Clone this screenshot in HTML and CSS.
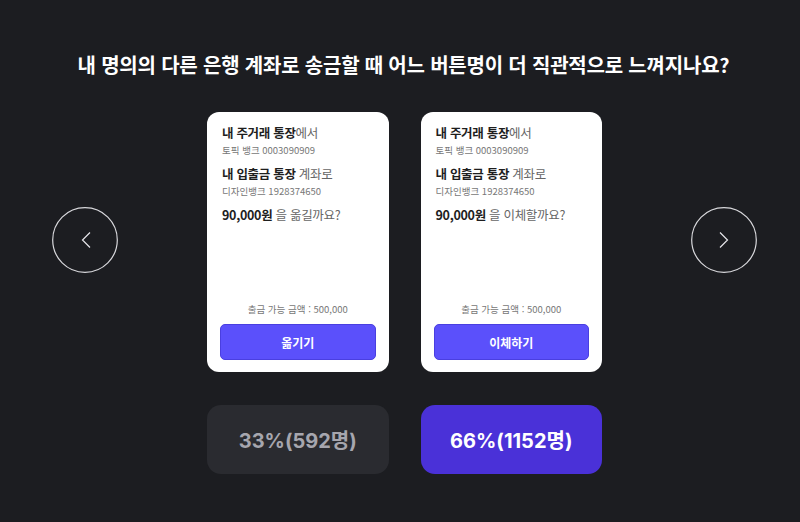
FILE: index.html
```html
<!DOCTYPE html>
<html lang="ko">
<head>
<meta charset="utf-8">
<link rel="stylesheet" href="styles.css">
</head>
<body>
<div class="page">
  <h1 class="title">내 명의의 다른 은행 계좌로 송금할 때 어느 버튼명이 더 직관적으로 느껴지나요?</h1>
  <div class="stage">
    <button class="nav">
      <svg width="66" height="66" viewBox="0 0 66 66"><circle cx="33" cy="33" r="32.3" fill="none" stroke="#d8d8dc" stroke-width="1.2"/><path d="M38 25.5 L30.5 33 L38 40.5" fill="none" stroke="#e6e6ea" stroke-width="1.2"/></svg>
    </button>
    <div class="center">
      <div class="cards">
        <div class="card">
          <div class="line"><b>내 주거래 통장</b><span class="soft">에서</span></div>
          <div class="sub">토픽 뱅크 0003090909</div>
          <div class="line gap"><b>내 입출금 통장</b> <span class="soft">계좌로</span></div>
          <div class="sub">디자인뱅크 1928374650</div>
          <div class="line gap"><b>90,000원</b> <span class="soft">을 옮길까요?</span></div>
          <div class="avail">출금 가능 금액 : 500,000</div>
          <div class="btn">옮기기</div>
        </div>
        <div class="card">
          <div class="line"><b>내 주거래 통장</b><span class="soft">에서</span></div>
          <div class="sub">토픽 뱅크 0003090909</div>
          <div class="line gap"><b>내 입출금 통장</b> <span class="soft">계좌로</span></div>
          <div class="sub">디자인뱅크 1928374650</div>
          <div class="line gap"><b>90,000원</b> <span class="soft">을 이체할까요?</span></div>
          <div class="avail">출금 가능 금액 : 500,000</div>
          <div class="btn">이체하기</div>
        </div>
      </div>
      <div class="results">
        <div class="result lose">33%(592명)</div>
        <div class="result win">66%(1152명)</div>
      </div>
    </div>
    <button class="nav">
      <svg width="66" height="66" viewBox="0 0 66 66"><circle cx="33" cy="33" r="32.3" fill="none" stroke="#d8d8dc" stroke-width="1.2"/><path d="M29 25.5 L36.5 33 L29 40.5" fill="none" stroke="#e6e6ea" stroke-width="1.2"/></svg>
    </button>
  </div>
</div>
</body>
</html>
```
FILE: styles.css
```css
* { box-sizing: border-box; }
html, body { margin: 0; padding: 0; }
body {
  background: #1c1d21;
  width: 800px;
  height: 522px;
  overflow: hidden;
  font-family: Inter, "Noto Sans CJK KR", sans-serif;
}
.page {
  padding-top: 50px;
}
.title {
  margin: 0 0 0 7px;
  font-family: "Noto Sans CJK KR", sans-serif;
  font-size: 20px;
  line-height: 30px;
  font-weight: 700;
  color: #ffffff;
  text-align: center;
  letter-spacing: -0.2px;
}
.stage {
  display: flex;
  align-items: flex-start;
  padding-left: 52px;
  margin-top: 32px;
}
.nav {
  width: 66px;
  height: 66px;
  padding: 0;
  border: 0;
  background: none;
  margin-top: 95px;
  display: block;
}
.nav svg { display: block; }
.center {
  margin: 0 89px;
  width: 395px;
}
.cards {
  display: flex;
  gap: 32px;
}
.card {
  width: 182px;
  height: 260px;
  background: #ffffff;
  border-radius: 12px;
  padding: 12px 13px 12px 15px;
  display: flex;
  flex-direction: column;
  font-family: "Noto Sans CJK KR", sans-serif;
}
.line {
  font-size: 12.5px;
  line-height: 18px;
  color: #222;
  letter-spacing: -0.3px;
}
.line b { font-weight: 700; color: #1e1e1e; }
.line .soft { color: #666; font-weight: 400; }
.line.gap { margin-top: 8px; }
.sub {
  font-size: 9.5px;
  line-height: 14px;
  color: #777;
  margin-top: 1px;
}
.avail {
  margin-top: auto;
  text-align: center;
  font-size: 9.5px;
  line-height: 14px;
  color: #777;
  margin-right: 2px;
}
.btn {
  margin-top: 8px;
  margin-left: -2px;
  height: 36px;
  border-radius: 5px;
  background: #5b50fb;
  border: 1px solid #4a3fe0;
  color: #fff;
  font-size: 12px;
  font-weight: 700;
  display: flex;
  align-items: center;
  justify-content: center;
}
.results {
  display: flex;
  gap: 32px;
  margin-top: 33px;
}
.result {
  width: 182px;
  height: 69px;
  border-radius: 14px;
  display: flex;
  align-items: center;
  justify-content: center;
  font-size: 20px;
  font-weight: 700;
}
.lose { background: #2a2b30; color: #a6a6ae; }
.win { background: #4a31d8; color: #ffffff; }
```
